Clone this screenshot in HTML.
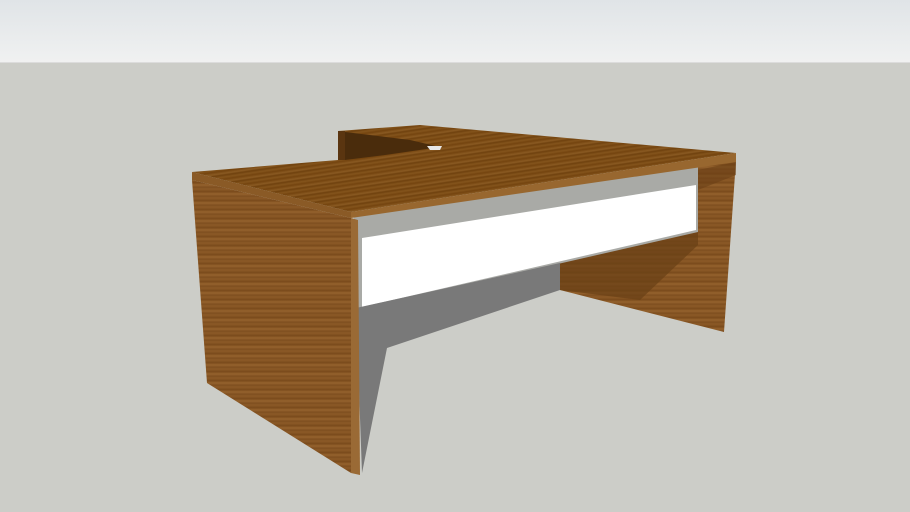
<!DOCTYPE html>
<html><head><style>html,body{margin:0;padding:0;width:910px;height:512px;overflow:hidden;background:#cccdc8}</style></head>
<body>
<svg width="910" height="512" viewBox="0 0 910 512" xmlns="http://www.w3.org/2000/svg" style="display:block">
<defs>
<linearGradient id="sky" x1="0" y1="0" x2="0" y2="1">
<stop offset="0" stop-color="#e0e4e7"/><stop offset="1" stop-color="#f0f1f1"/></linearGradient>
<linearGradient id="wt" gradientUnits="userSpaceOnUse" x1="0" y1="0" x2="1.2" y2="8" spreadMethod="repeat">
<stop offset="0" stop-color="#74440f"/><stop offset="0.3" stop-color="#8a5a22"/><stop offset="0.5" stop-color="#6f410e"/><stop offset="0.75" stop-color="#84541c"/><stop offset="1" stop-color="#74440f"/></linearGradient>
<linearGradient id="wl" gradientUnits="userSpaceOnUse" x1="0" y1="0" x2="0" y2="9" spreadMethod="repeat">
<stop offset="0" stop-color="#8c5a27"/><stop offset="0.3" stop-color="#7a4b1c"/><stop offset="0.55" stop-color="#95632e"/><stop offset="0.8" stop-color="#7f4f20"/><stop offset="1" stop-color="#8c5a27"/></linearGradient>
</defs>
<rect x="0" y="0" width="910" height="62" fill="url(#sky)"/>
<rect x="0" y="62" width="910" height="1" fill="#dcdcdc"/>
<!-- right leg -->
<polygon points="698,167 736,160 724,332 560,290 560,263 698,230" fill="url(#wl)"/>
<polygon points="560,263 698,230 698,245 640,300 560,290" fill="#6a4015" opacity="0.7"/>
<polygon points="698,170 736,162 736,175 698,190" fill="#6a4015" opacity="0.6"/>
<!-- gray underside & panel -->
<polygon points="354,217 698,167 698,232 356,310" fill="#a9aaa6"/>
<polygon points="362,238 696,185 696,230 362,307" fill="#ffffff"/>
<polygon points="356,308 560,263 560,290 387,348 362,473" fill="#797979"/>
<!-- left leg -->
<polygon points="192,180 351,218 351,473 207,383" fill="url(#wl)"/>
<polygon points="351,218 358,220 360,475 351,473" fill="#9a6a35"/>
<!-- top -->
<polygon points="192,172 338,160 338,131 420,125 736,153 351,212" fill="url(#wt)"/>
<!-- notch -->
<polygon points="338,131 345,131 345,160 338,160" fill="#5a3510"/>
<polygon points="345,132 410,140 440,147 385,155 345,160" fill="#4a2c0c"/>
<polygon points="427,146 442,146 440,150 430,150" fill="#e8e8e8"/>
<polygon points="192,172 351,212 351,218 192,180" fill="#8a5a26"/>
<polygon points="351,212 736,153 736,162 351,218" fill="#98672f"/>
</svg>
</body></html>
